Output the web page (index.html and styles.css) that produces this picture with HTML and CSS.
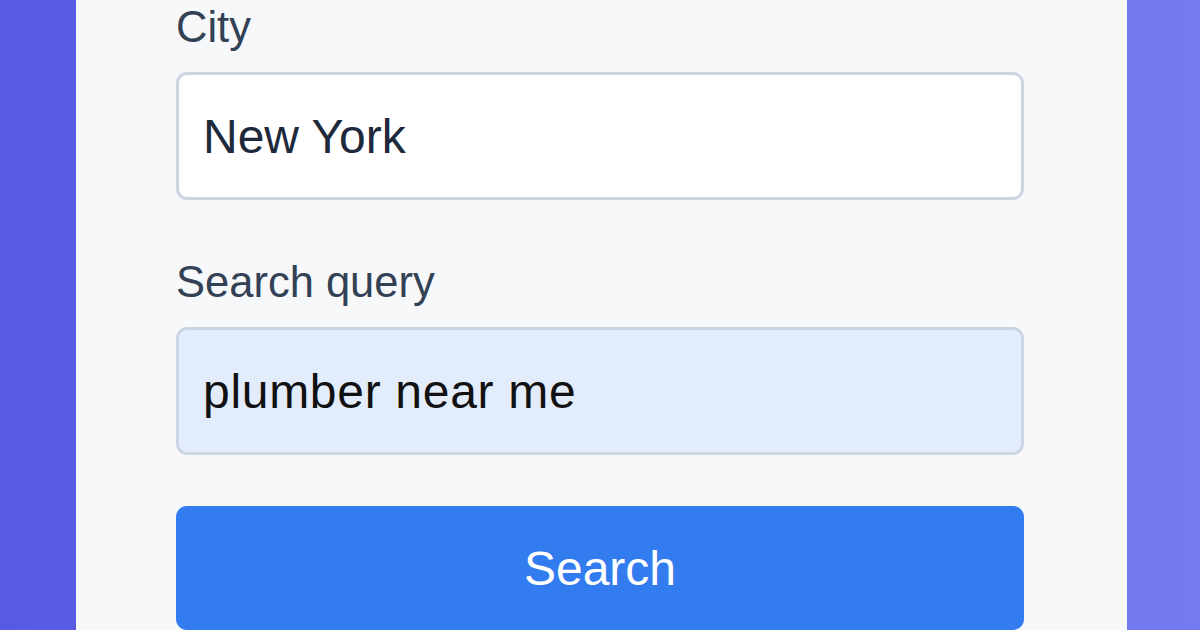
FILE: index.html
```html
<!DOCTYPE html>
<html lang="en">
<head>
    <meta charset="UTF-8">
    <meta name="viewport" content="width=device-width, initial-scale=1.0">
    <title>Local Search</title>
    <link rel="stylesheet" href="styles.css">
</head>
<body>
    <div class="card">
        <form class="search-form" onsubmit="return false;">
            <div class="field">
                <label for="city">City</label>
                <input type="text" id="city" class="input" value="New York">
            </div>
            <div class="field">
                <label for="query">Search query</label>
                <input type="text" id="query" class="input input-autofilled" value="plumber near me">
            </div>
            <button type="submit" class="btn">Search</button>
        </form>
    </div>
</body>
</html>
```

FILE: styles.css
```css
html, body {
    height: 100%;
}

body {
    margin: 0;
    overflow: hidden;
    font-family: 'Liberation Sans', Arial, sans-serif;
    background: linear-gradient(90deg, #5859e4 0%, #6569e9 50%, #757bee 100%);
}

.card {
    box-sizing: border-box;
    width: 1051px;
    height: 100%;
    margin-left: 76px;
    padding: 1px 103px 0 100px;
    background-color: #f7f8fa;
}

.search-form {
    display: flex;
    flex-direction: column;
}

.field {
    display: flex;
    flex-direction: column;
    margin-bottom: 56px;
}

.field:last-of-type {
    margin-bottom: 51px;
}

label {
    font-size: 43.5px;
    line-height: 52px;
    color: #334155;
    margin-bottom: 19px;
}

.input {
    box-sizing: border-box;
    width: 848px;
    height: 128px;
    padding: 0 24px;
    border: 3px solid #ccd6e2;
    border-radius: 11px;
    background-color: #fff;
    font-family: inherit;
    font-size: 48px;
    color: #1e293b;
    outline: none;
}

.input-autofilled {
    background-color: #e3ecfb;
    color: #111;
    letter-spacing: 0.7px;
}

.btn {
    width: 848px;
    height: 124px;
    padding-top: 2px;
    border: none;
    border-radius: 11px;
    background-color: #337cef;
    color: #fff;
    font-family: inherit;
    font-size: 48px;
    cursor: pointer;
}

.btn:hover {
    background-color: #2b6fdc;
}
```
